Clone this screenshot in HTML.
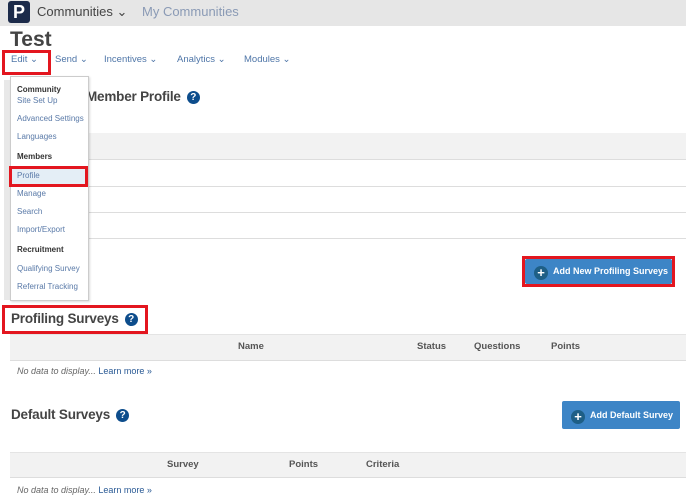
<!DOCTYPE html><html><head><style>
*{margin:0;padding:0;box-sizing:border-box}
body{width:686px;height:504px;overflow:hidden;background:#fff;font-family:"Liberation Sans",sans-serif;position:relative;color:#444}
.a{position:absolute;white-space:nowrap}
.q{display:inline-block;width:13px;height:13px;border-radius:50%;background:#0d4d8c;color:#fff;font-size:10px;font-weight:bold;text-align:center;line-height:13px;vertical-align:1px;margin-left:6px}
.h{font-size:13.5px;font-weight:bold;color:#444;letter-spacing:-0.2px}
.th{font-size:9.5px;font-weight:bold;color:#555}
.red{position:absolute;border:3px solid #e3161f}
.nav{font-size:9.5px;color:#4f76a8}
.dd{font-size:8px;color:#5a7aa8}
.ds{font-size:8px;font-weight:bold;color:#333}
.btn{position:absolute;white-space:nowrap;background:#3d85c6;color:#fff;font-size:9px;font-weight:bold;border-radius:2px;padding-left:9px;line-height:28px}
.pl{display:inline-block;width:14px;height:14px;border-radius:50%;background:#1e5f86;vertical-align:-3px;margin-right:5px;text-align:center;line-height:14px;font-size:13px}
</style></head><body>
<div class="a" style="left:0;top:0;width:686px;height:26px;background:#e6e6e6"></div>
<div class="a" style="left:8px;top:1px;width:22px;height:22px;background:#1c2b4a;border-radius:3px;color:#fff;font-weight:bold;font-size:18px;text-align:center;line-height:22px">P</div>
<div class="a" style="left:37px;top:4px;font-size:13px;color:#444">Communities ⌄</div>
<div class="a" style="left:142px;top:4px;font-size:13px;color:#8a9ab5">My Communities</div>
<div class="a" style="left:10px;top:28px;font-size:21px;font-weight:bold;color:#444">Test</div>
<div class="a nav" style="left:11px;top:54px">Edit ⌄</div>
<div class="a nav" style="left:55px;top:54px">Send ⌄</div>
<div class="a nav" style="left:104px;top:54px">Incentives ⌄</div>
<div class="a nav" style="left:177px;top:54px">Analytics ⌄</div>
<div class="a nav" style="left:244px;top:54px">Modules ⌄</div>
<div class="red" style="left:2px;top:50px;width:49px;height:25px"></div>
<div class="a" style="left:4px;top:80px;width:6px;height:220px;background:#e8e8e8"></div>
<div class="a h" style="left:86px;top:89px">Member Profile<span class="q">?</span></div>
<div class="a" style="left:10px;top:133px;width:676px;height:27px;background:#f2f2f2;border-bottom:1px solid #ddd"></div>
<div class="a" style="left:10px;top:186px;width:676px;border-top:1px solid #ddd"></div>
<div class="a" style="left:10px;top:212px;width:676px;border-top:1px solid #ddd"></div>
<div class="a" style="left:10px;top:238px;width:676px;border-top:1px solid #ddd"></div>
<div class="a" style="left:10px;top:76px;width:79px;height:225px;background:#fff;border:1px solid #ccc;box-shadow:1px 1px 2px rgba(0,0,0,.15)"></div>
<div class="a ds" style="left:17px;top:85px">Community</div>
<div class="a dd" style="left:17px;top:96px">Site Set Up</div>
<div class="a dd" style="left:17px;top:114px">Advanced Settings</div>
<div class="a dd" style="left:17px;top:132px">Languages</div>
<div class="a ds" style="left:17px;top:152px">Members</div>
<div class="a" style="left:11px;top:168px;width:77px;height:17px;background:#e4eef6"></div>
<div class="a dd" style="left:17px;top:171px">Profile</div>
<div class="red" style="left:9px;top:166px;width:79px;height:21px"></div>
<div class="a dd" style="left:17px;top:189px">Manage</div>
<div class="a dd" style="left:17px;top:207px">Search</div>
<div class="a dd" style="left:17px;top:225px">Import/Export</div>
<div class="a ds" style="left:17px;top:245px">Recruitment</div>
<div class="a dd" style="left:17px;top:264px">Qualifying Survey</div>
<div class="a dd" style="left:17px;top:282px">Referral Tracking</div>
<div class="red" style="left:522px;top:256px;width:153px;height:31px"></div>
<div class="btn" style="left:525px;top:259px;width:147px;height:25px;line-height:25px"><span class="pl">+</span>Add New Profiling Surveys</div>
<div class="red" style="left:2px;top:305px;width:146px;height:29px"></div>
<div class="a h" style="left:11px;top:311px">Profiling Surveys<span class="q">?</span></div>
<div class="a" style="left:10px;top:334px;width:676px;height:27px;background:#f2f2f2;border-top:1px solid #e4e4e4;border-bottom:1px solid #ddd"></div>
<div class="a th" style="left:238px;top:341px">Name</div>
<div class="a th" style="left:417px;top:341px">Status</div>
<div class="a th" style="left:474px;top:341px">Questions</div>
<div class="a th" style="left:551px;top:341px">Points</div>
<div class="a" style="left:17px;top:366px;font-size:9px;font-style:italic;color:#666">No data to display... <span style="font-style:normal;color:#2a5a95">Learn more »</span></div>
<div class="a h" style="left:11px;top:407px">Default Surveys<span class="q">?</span></div>
<div class="btn" style="left:562px;top:401px;width:118px;height:28px"><span class="pl">+</span>Add Default Survey</div>
<div class="a" style="left:10px;top:452px;width:676px;height:26px;background:#f2f2f2;border-top:1px solid #e4e4e4;border-bottom:1px solid #ddd"></div>
<div class="a th" style="left:167px;top:459px">Survey</div>
<div class="a th" style="left:289px;top:459px">Points</div>
<div class="a th" style="left:366px;top:459px">Criteria</div>
<div class="a" style="left:17px;top:485px;font-size:9px;font-style:italic;color:#666">No data to display... <span style="font-style:normal;color:#2a5a95">Learn more »</span></div>
</body></html>
